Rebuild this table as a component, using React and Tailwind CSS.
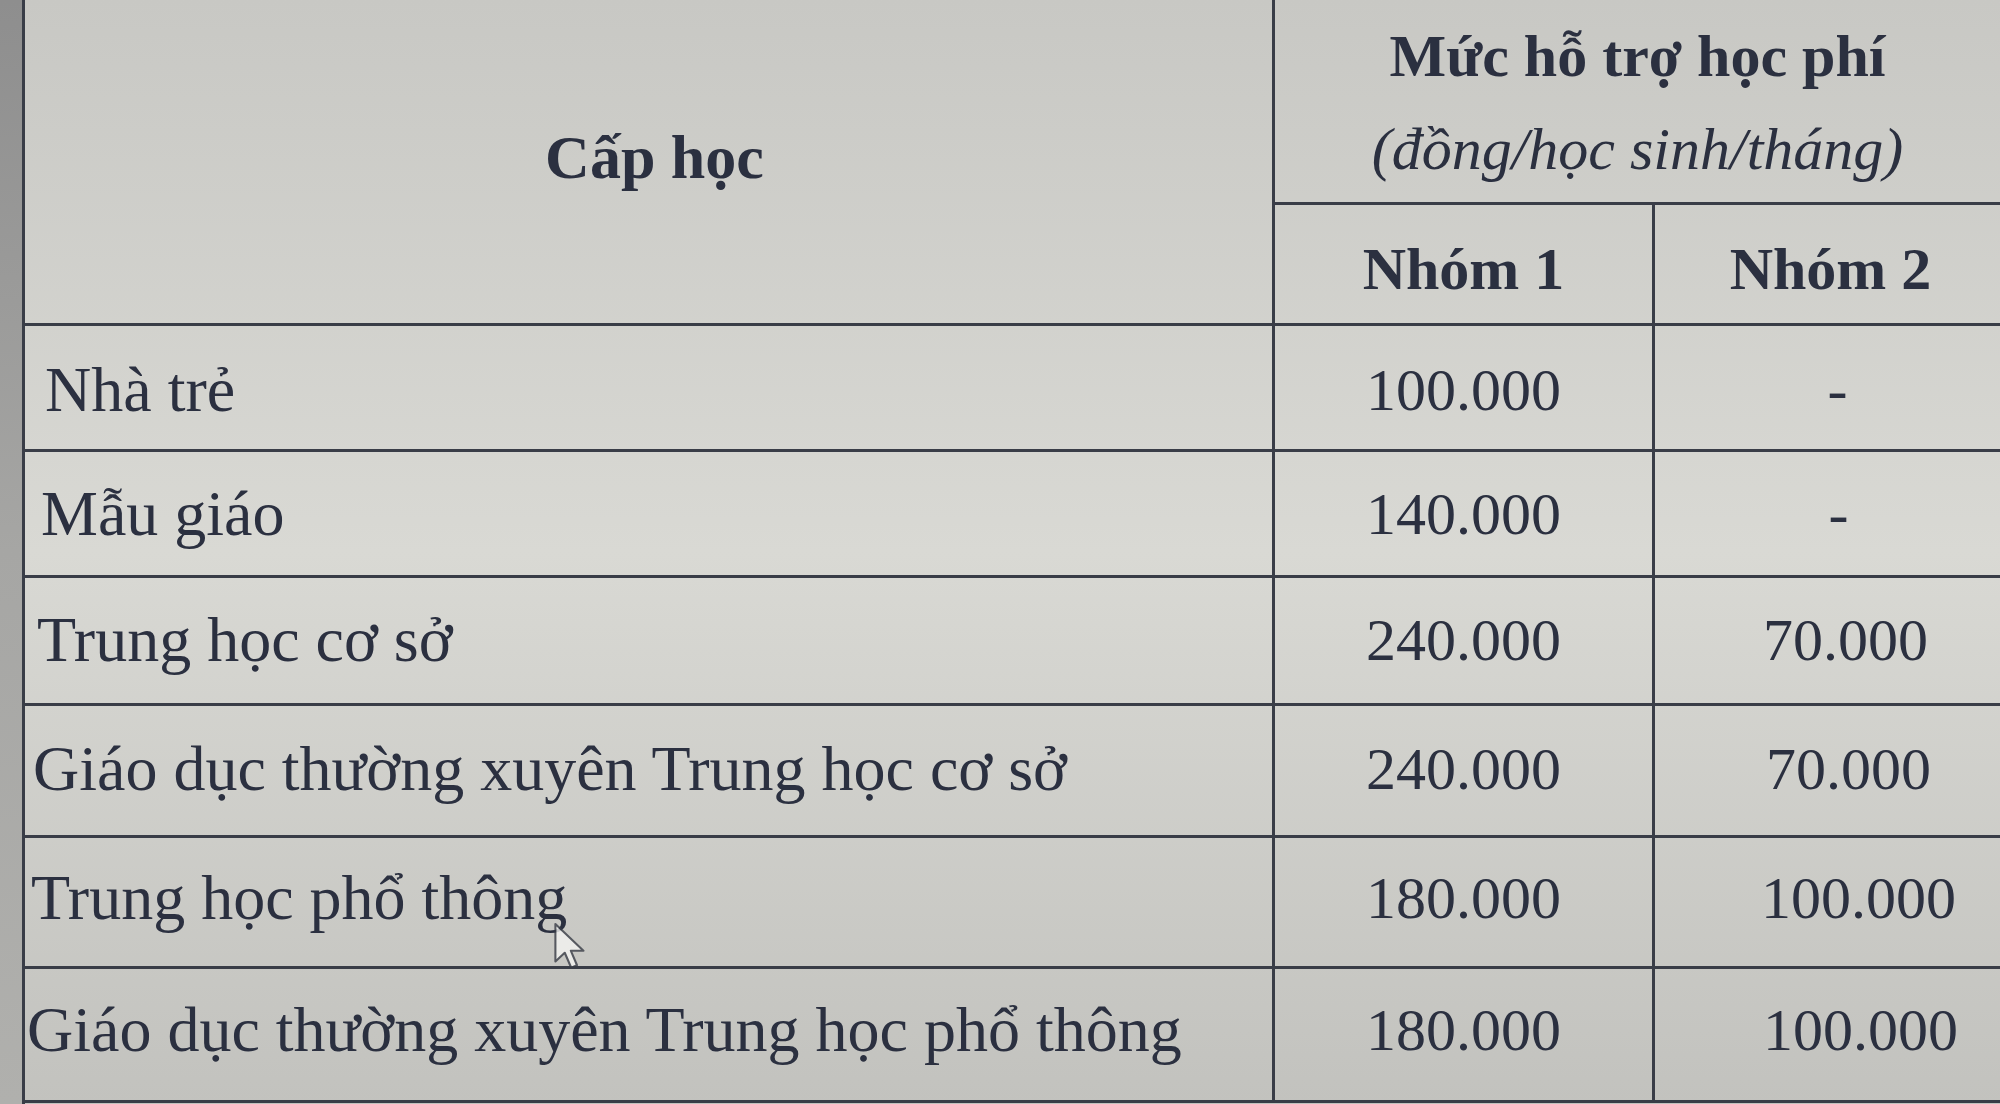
import React from "react";

const rows = [
  { c: ["Nhà trẻ", "100.000", "-"], h: "h-[126px]", pl: "pl-[20px]", pad: "pt-[4px]", s: "pl-[20px]" },
  { c: ["Mẫu giáo", "140.000", "-"], h: "h-[126px]", pl: "pl-[16px]", pad: "pb-[0px]", s: "pl-[22px]" },
  { c: ["Trung học cơ sở", "240.000", "70.000"], h: "h-[128px]", pl: "pl-[12px]", pad: "pb-[2px]", s: "pl-[36px]" },
  { c: ["Giáo dục thường xuyên Trung học cơ sở", "240.000", "70.000"], h: "h-[132px]", pl: "pl-[8px]", pad: "pb-[4px]", s: "pl-[42px]" },
  { c: ["Trung học phổ thông", "180.000", "100.000"], h: "h-[131px]", pl: "pl-[6px]", pad: "pb-[8px]", s: "pl-[62px]" },
  { c: ["Giáo dục thường xuyên Trung học phổ thông", "180.000", "100.000"], h: "h-[134px]", pl: "pl-[2px]", pad: "pb-[10px]", s: "pl-[66px]" },
];

function Cursor() {
  return (
    <svg
      className="absolute left-[553px] top-[922px] opacity-80"
      width="36"
      height="52"
      viewBox="0 0 17 25"
    >
      <path
        d="M1 1 L1 19 L5.5 14.8 L8.6 22 L11.4 20.8 L8.4 13.8 L14.5 13.8 Z"
        fill="#f4f4f2"
        stroke="#3a3e48"
        strokeWidth="1"
        strokeLinejoin="round"
      />
    </svg>
  );
}

export default function App() {
  return (
    <div
      className="relative flex h-[1104px] w-[2000px] overflow-hidden bg-linear-to-b from-[#c8c8c4] via-[#d9d9d4] to-[#c2c2be] text-[#2b3040]"
      style={{ fontFamily: '"Liberation Serif", "Times New Roman", serif' }}
    >
      <div className="w-[22px] shrink-0 bg-linear-to-b from-[#8e8e8e] via-[#a6a6a4] to-[#b0b0ad]" />
      <div className="flex flex-1 flex-col border-l-[3px] border-[#393d47]">
        {/* header */}
        <div className="flex h-[326px] shrink-0 border-b-[3px] border-[#393d47]">
          <div className="flex w-[1250px] shrink-0 items-center justify-center border-r-[3px] border-[#393d47] pb-[8px] pl-[12px] text-[62px] font-bold">
            Cấp học
          </div>
          <div className="flex flex-1 flex-col">
            <div className="flex h-[205px] shrink-0 flex-col items-center justify-center border-b-[3px] border-[#393d47] pt-[4px] text-[60px] leading-[93px]">
              <span className="font-bold">Mức hỗ trợ học phí</span>
              <span className="italic">(đồng/học sinh/tháng)</span>
            </div>
            <div className="flex flex-1 text-[60px] font-bold">
              <div className="flex w-[380px] shrink-0 items-center justify-center border-r-[3px] border-[#393d47] pt-[10px]">
                Nhóm 1
              </div>
              <div className="flex flex-1 items-center justify-center pl-[6px] pt-[10px]">
                Nhóm 2
              </div>
            </div>
          </div>
        </div>
        {/* body */}
        {rows.map((r, i) => (
          <div
            key={i}
            className={`flex shrink-0 border-b-[3px] border-[#393d47] ${r.h}`}
          >
            <div
              className={`flex w-[1250px] shrink-0 items-center justify-start border-r-[3px] border-[#393d47] text-[64px] ${r.pl} ${r.pad}`}
            >
              {r.c[0]}
            </div>
            <div
              className={`flex w-[380px] shrink-0 items-center justify-center border-r-[3px] border-[#393d47] text-[60px] ${r.pad}`}
            >
              {r.c[1]}
            </div>
            <div
              className={`flex flex-1 items-center justify-center text-[60px] ${r.s} ${r.pad}`}
            >
              {r.c[2]}
            </div>
          </div>
        ))}
      </div>
      <Cursor />
    </div>
  );
}
